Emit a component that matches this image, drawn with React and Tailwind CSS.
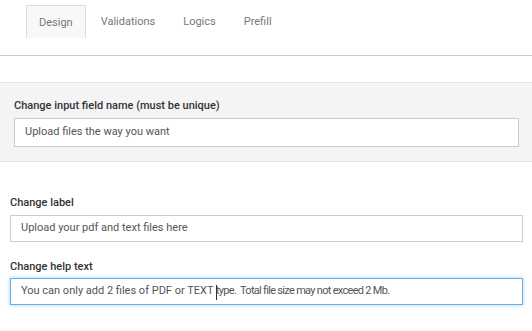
export default function App() {
  const font = { fontFamily: "Roboto, 'Noto Sans', sans-serif" };
  const tabs = ["Design", "Validations", "Logics", "Prefill"];
  return (
    <div className="w-[532px] h-[331px] bg-white overflow-hidden" style={font}>
      <div className="flex pl-[26px] pt-[5px] h-[56px] border-b border-[#cccccc]">
        {tabs.map((t, i) => (
          <div
            key={t}
            className={
              "h-[33px] px-3 pt-[2px] mr-[2px] flex items-center text-[11px] text-[#777] " +
              (i === 0
                ? "bg-[#f8f8f8] border border-b-0 border-[#dddddd]"
                : "border border-transparent")
            }
          >
            {t}
          </div>
        ))}
      </div>
      <div className="h-[26px]" />
      <div className="bg-[#f4f4f4] border-y border-[#e6e6e6] px-[14px] pt-[16px] pb-[14px]">
        <div className="text-[11px] font-medium text-[#333] leading-[14px] mb-[5px]">
          Change input field name (must be unique)
        </div>
        <div className="h-[29px] w-[505px] bg-white border border-[#cccccc] flex items-center px-[10px] text-[11px] text-[#555]">
          Upload files the way you want
        </div>
      </div>
      <div className="px-[10px] pt-[34px]">
        <div className="text-[11px] font-medium text-[#333] leading-[14px] mb-[5px]">
          Change label
        </div>
        <div className="h-[27px] w-[513px] bg-white border border-[#cccccc] flex items-center px-[10px] text-[11px] text-[#555]">
          Upload your pdf and text files here
        </div>
        <div className="text-[11px] font-medium text-[#333] leading-[14px] mt-[18px] mb-[4px]">
          Change help text
        </div>
        <div className="h-[27px] w-[513px] bg-white border border-[#66afe9] shadow-[0_0_4px_rgba(102,175,233,0.6)] flex items-center px-[10px] text-[11px] text-[#555] whitespace-pre">
          <span>You can only add 2 files of PDF or TEXT </span>
          <span className="relative inline-block w-0 h-[14px]">
            <span className="absolute left-0 top-0 w-px h-[15px] bg-[#333]" />
          </span>
          <span className="tracking-[-0.7px]">type.  Total file size may not exceed 2 Mb.</span>
        </div>
      </div>
    </div>
  );
}
